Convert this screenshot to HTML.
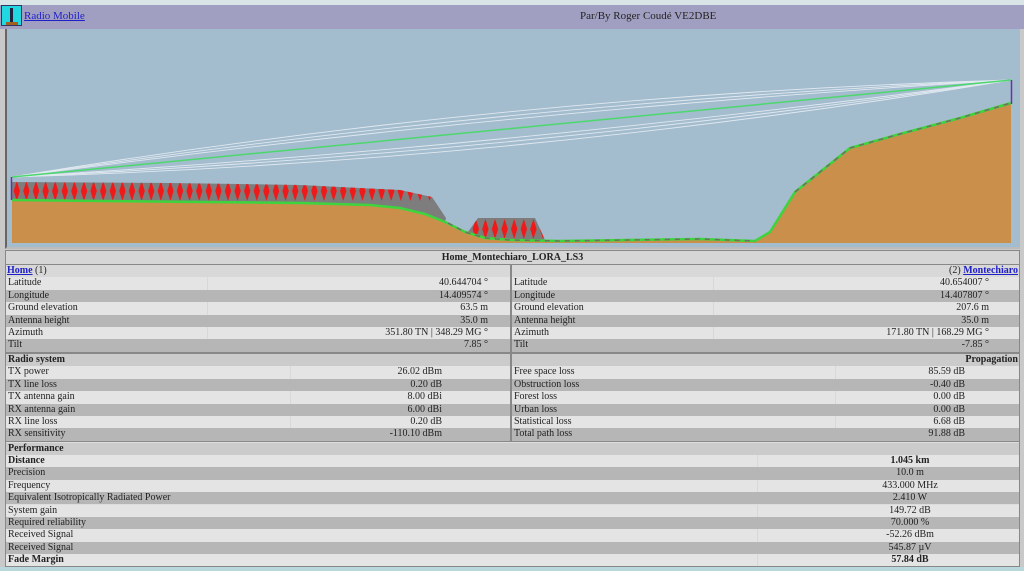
<!DOCTYPE html>
<html><head><meta charset="utf-8"><style>
*{margin:0;padding:0;box-sizing:border-box}
body{width:1024px;height:571px;overflow:hidden;background:#c9c9c9;font-family:"Liberation Serif",serif;font-size:10px;color:#222;position:relative}
.a{position:absolute}
.r{position:absolute;height:12.4px;line-height:12px;white-space:nowrap}
.l{background:#e4e4e4}.d{background:#b6b6b6}.h{background:#cbcbcb;font-weight:bold}
.r span{position:absolute;top:0}
a{color:#2020c8;text-decoration:underline}
.sep{position:absolute;top:0;bottom:0;width:1px;background:#d8d8d8}
</style></head><body>
<div class="a" style="left:0;top:0;width:1024px;height:5px;background:#d8e4e6"></div>
<div class="a" style="left:0;top:5px;width:1024px;height:24px;background:#a19fc1"></div>
<div class="a" style="left:1px;top:5px;width:21px;height:21px;background:#22d8e0;border:1px solid #336"></div>
<svg class="a" style="left:1px;top:5px" width="22" height="22"><rect x="9" y="3" width="3" height="16" fill="#224"/><rect x="5" y="17" width="12" height="3" fill="#a06020"/></svg>
<div class="a" style="left:24px;top:10px;font-size:11px"><a>Radio Mobile</a></div>
<div class="a" style="left:580px;top:10px;font-size:11px">Par/By Roger Coudé VE2DBE</div>
<div class="a" style="left:5px;top:29px;width:1015px;height:220px;background:#a3bcce;border-left:2px solid #666;border-bottom:2px solid #bbb"></div>
<svg class="a" style="left:0;top:0" width="1024" height="250">
<defs>
<pattern id="dm" x="12" y="181" width="9.6" height="60" patternUnits="userSpaceOnUse"><polygon points="4.8,0 8,10 4.8,20 1.6,10" fill="#f01818"/></pattern>
<pattern id="dm2" x="471" y="219" width="9.6" height="60" patternUnits="userSpaceOnUse"><polygon points="4.8,0 8,10 4.8,20 1.6,10" fill="#f01818"/></pattern>
</defs>
<path d="M12,200 L100,201 L300,203 L370,205 L400,208 L425,214 L445,222 L465,232 L485,238 L510,240 L560,241 L700,239 L755,241 L770,232 L795,192 L850,148 L900,134 L960,118 L1011,103 L1011,243 L12,243Z" fill="#c98f4b"/>
<path d="M12,182 L170,183 L300,185 L400,190 L432,197 L446,218 L445,222 L425,214 L400,208 L370,205 L300,203 L100,201 L12,200Z" fill="#7d7d7d"/>
<path d="M12,182 L170,183 L300,185 L400,190 L432,197 L446,218 L445,222 L425,214 L400,208 L370,205 L300,203 L100,201 L12,200Z" fill="url(#dm)"/>
<path d="M468,232 L478,218 L535,218 L545,240 L510,240 L485,238Z" fill="#7d7d7d"/>
<path d="M468,232 L478,218 L535,218 L545,240 L510,240 L485,238Z" fill="url(#dm2)"/>
<path d="M12,200 L100,201 L300,203 L370,205 L400,208 L425,214 L445,222 L465,232 L485,238 L510,240 L560,241 L700,239 L755,241 L770,232 L795,192 L850,148 L900,134 L960,118 L1011,103" fill="none" stroke="#3ed43e" stroke-width="2.5"/>
<path d="M448,223 L465,232 L485,238 L510,240 L560,241 L700,239 L755,241 M795,192 L850,148 L900,134 L960,118 L1011,103" fill="none" stroke="#707060" stroke-width="1.5" stroke-dasharray="5,5"/>
<g fill="none" stroke="#e8eef4" stroke-width="0.9" opacity="0.9">
<path d="M12,177 Q508,95 1011,80"/><path d="M12,177 Q509,103 1011,80"/><path d="M12,177 Q510,110 1011,80"/>
<path d="M12,177 Q514,147 1011,80"/><path d="M12,177 Q515,154 1011,80"/><path d="M12,177 Q515,162 1011,80"/>
</g>
<line x1="12" y1="177" x2="1011" y2="80" stroke="#4cd86c" stroke-width="1.5"/>
<line x1="11.5" y1="177" x2="11.5" y2="200" stroke="#7030a0" stroke-width="1.5"/>
<line x1="1011.5" y1="80" x2="1011.5" y2="104" stroke="#7030a0" stroke-width="1.5"/>
</svg>
<div class="a" style="left:5px;top:250px;width:1015px;height:15px;background:#d6d6d6;border:1px solid #888;text-align:center;font-weight:bold;line-height:13px">Home_Montechiaro_LORA_LS3</div>
<div class="a" style="left:5px;top:265px;width:506px;height:88px;border:1px solid #888;background:#ddd"></div>
<div class="a" style="left:511px;top:265px;width:509px;height:88px;border:1px solid #888;background:#ddd"></div>
<div class="r" style="left:6px;top:265px;width:504px;background:#d8d8d8"><span style="left:1px"><a><b>Home</b></a> (1)</span></div>
<div class="r l" style="left:6px;top:277.4px;width:504px"><div class="sep" style="left:201px"></div><span style="left:2px">Latitude</span><span style="right:22px">40.644704 °</span></div>
<div class="r d" style="left:6px;top:289.8px;width:504px"><span style="left:2px">Longitude</span><span style="right:22px">14.409574 °</span></div>
<div class="r l" style="left:6px;top:302.2px;width:504px"><div class="sep" style="left:201px"></div><span style="left:2px">Ground elevation</span><span style="right:22px">63.5 m</span></div>
<div class="r d" style="left:6px;top:314.6px;width:504px"><span style="left:2px">Antenna height</span><span style="right:22px">35.0 m</span></div>
<div class="r l" style="left:6px;top:327px;width:504px"><div class="sep" style="left:201px"></div><span style="left:2px">Azimuth</span><span style="right:22px">351.80 TN | 348.29 MG °</span></div>
<div class="r d" style="left:6px;top:339.4px;width:504px"><span style="left:2px">Tilt</span><span style="right:22px">7.85 °</span></div>
<div class="r" style="left:512px;top:265px;width:507px;background:#d8d8d8"><span style="right:1px">(2) <a><b>Montechiaro</b></a></span></div>
<div class="r l" style="left:512px;top:277.4px;width:507px"><div class="sep" style="left:201px"></div><span style="left:2px">Latitude</span><span style="right:30px">40.654007 °</span></div>
<div class="r d" style="left:512px;top:289.8px;width:507px"><span style="left:2px">Longitude</span><span style="right:30px">14.407807 °</span></div>
<div class="r l" style="left:512px;top:302.2px;width:507px"><div class="sep" style="left:201px"></div><span style="left:2px">Ground elevation</span><span style="right:30px">207.6 m</span></div>
<div class="r d" style="left:512px;top:314.6px;width:507px"><span style="left:2px">Antenna height</span><span style="right:30px">35.0 m</span></div>
<div class="r l" style="left:512px;top:327px;width:507px"><div class="sep" style="left:201px"></div><span style="left:2px">Azimuth</span><span style="right:30px">171.80 TN | 168.29 MG °</span></div>
<div class="r d" style="left:512px;top:339.4px;width:507px"><span style="left:2px">Tilt</span><span style="right:30px">-7.85 °</span></div>
<div class="a" style="left:5px;top:353px;width:506px;height:89px;border:1px solid #888;background:#ddd"></div>
<div class="a" style="left:511px;top:353px;width:509px;height:89px;border:1px solid #888;background:#ddd"></div>
<div class="r h" style="left:6px;top:354px;width:504px"><span style="left:2px">Radio system</span></div>
<div class="r l" style="left:6px;top:366.4px;width:504px"><div class="sep" style="left:284px"></div><span style="left:2px">TX power</span><span style="right:68px">26.02 dBm</span></div>
<div class="r d" style="left:6px;top:378.8px;width:504px"><span style="left:2px">TX line loss</span><span style="right:68px">0.20 dB</span></div>
<div class="r l" style="left:6px;top:391.2px;width:504px"><div class="sep" style="left:284px"></div><span style="left:2px">TX antenna gain</span><span style="right:68px">8.00 dBi</span></div>
<div class="r d" style="left:6px;top:403.6px;width:504px"><span style="left:2px">RX antenna gain</span><span style="right:68px">6.00 dBi</span></div>
<div class="r l" style="left:6px;top:416px;width:504px"><div class="sep" style="left:284px"></div><span style="left:2px">RX line loss</span><span style="right:68px">0.20 dB</span></div>
<div class="r d" style="left:6px;top:428.4px;width:504px"><span style="left:2px">RX sensitivity</span><span style="right:68px">-110.10 dBm</span></div>
<div class="r h" style="left:512px;top:354px;width:507px"><span style="right:1px">Propagation</span></div>
<div class="r l" style="left:512px;top:366.4px;width:507px"><div class="sep" style="left:323px"></div><span style="left:2px">Free space loss</span><span style="right:54px">85.59 dB</span></div>
<div class="r d" style="left:512px;top:378.8px;width:507px"><span style="left:2px">Obstruction loss</span><span style="right:54px">-0.40 dB</span></div>
<div class="r l" style="left:512px;top:391.2px;width:507px"><div class="sep" style="left:323px"></div><span style="left:2px">Forest loss</span><span style="right:54px">0.00 dB</span></div>
<div class="r d" style="left:512px;top:403.6px;width:507px"><span style="left:2px">Urban loss</span><span style="right:54px">0.00 dB</span></div>
<div class="r l" style="left:512px;top:416px;width:507px"><div class="sep" style="left:323px"></div><span style="left:2px">Statistical loss</span><span style="right:54px">6.68 dB</span></div>
<div class="r d" style="left:512px;top:428.4px;width:507px"><span style="left:2px">Total path loss</span><span style="right:54px">91.88 dB</span></div>
<div class="a" style="left:5px;top:441px;width:1015px;height:126px;border:1px solid #888;background:#ddd"></div>
<div class="r h" style="left:6px;top:442.5px;width:1013px"><span style="left:2px">Performance</span></div>
<div class="r l" style="left:6px;top:454.9px;width:1013px"><div class="sep" style="left:751px"></div><b><span style="left:2px">Distance</span><span style="left:752px;width:304px;text-align:center">1.045 km</span></b></div>
<div class="r d" style="left:6px;top:467.3px;width:1013px"><span style="left:2px">Precision</span><span style="left:752px;width:304px;text-align:center">10.0 m</span></div>
<div class="r l" style="left:6px;top:479.7px;width:1013px"><div class="sep" style="left:751px"></div><span style="left:2px">Frequency</span><span style="left:752px;width:304px;text-align:center">433.000 MHz</span></div>
<div class="r d" style="left:6px;top:492.1px;width:1013px"><span style="left:2px">Equivalent Isotropically Radiated Power</span><span style="left:752px;width:304px;text-align:center">2.410 W</span></div>
<div class="r l" style="left:6px;top:504.5px;width:1013px"><div class="sep" style="left:751px"></div><span style="left:2px">System gain</span><span style="left:752px;width:304px;text-align:center">149.72 dB</span></div>
<div class="r d" style="left:6px;top:516.9px;width:1013px"><span style="left:2px">Required reliability</span><span style="left:752px;width:304px;text-align:center">70.000 %</span></div>
<div class="r l" style="left:6px;top:529.3px;width:1013px"><div class="sep" style="left:751px"></div><span style="left:2px">Received Signal</span><span style="left:752px;width:304px;text-align:center">-52.26 dBm</span></div>
<div class="r d" style="left:6px;top:541.7px;width:1013px"><span style="left:2px">Received Signal</span><span style="left:752px;width:304px;text-align:center">545.87 µV</span></div>
<div class="r l" style="left:6px;top:554.1px;width:1013px"><div class="sep" style="left:751px"></div><b><span style="left:2px">Fade Margin</span><span style="left:752px;width:304px;text-align:center">57.84 dB</span></b></div>
<div class="a" style="left:0;top:567px;width:1024px;height:4px;background:#b8d8dc"></div>
</body></html>
